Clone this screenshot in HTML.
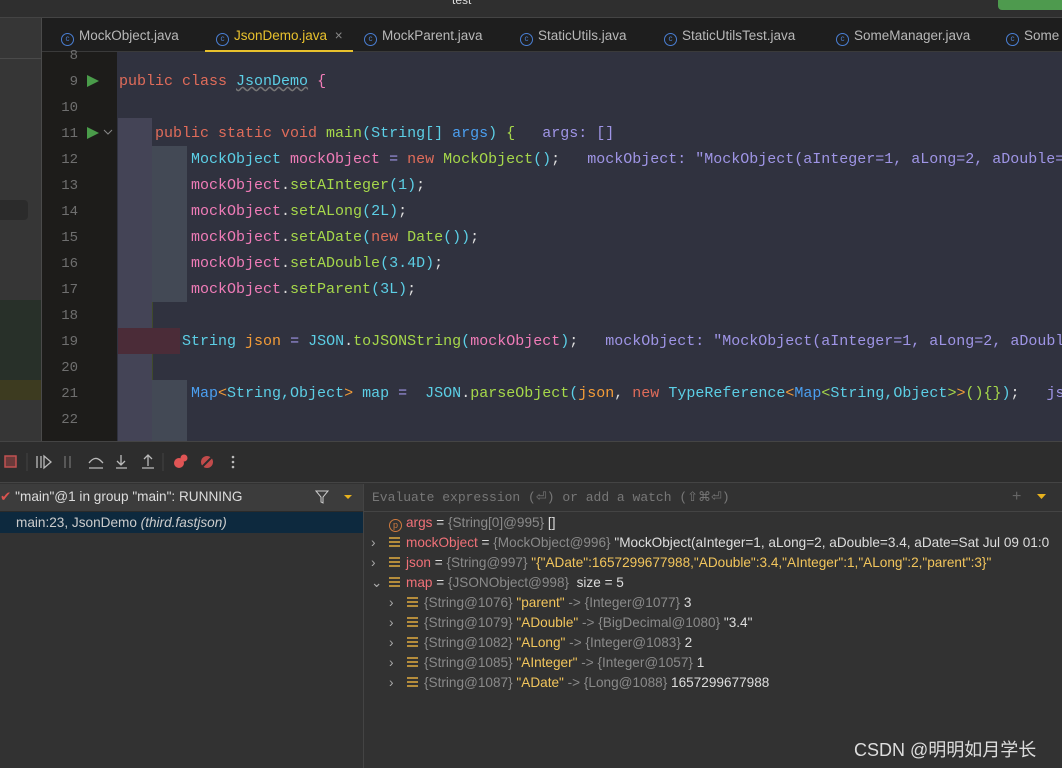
<!DOCTYPE html>
<html><head><meta charset="utf-8"><style>
*{margin:0;padding:0;box-sizing:border-box}
body{width:1062px;height:768px;overflow:hidden;background:#323232;font-family:"Liberation Sans","Noto Sans CJK SC",sans-serif;position:relative;color:#bbb}
.a{position:absolute}
.code{font-family:"Liberation Mono",monospace;font-size:15px;white-space:pre;line-height:26px}
.ln{position:absolute;left:42px;width:36px;text-align:right;font-family:"Liberation Mono",monospace;font-size:14px;color:#6f6f6f}
.k{color:#e06c5a}.t{color:#5ccfe6}.v{color:#f07cb8}.f{color:#a6d84a}.p{color:#5ccfe6}.n{color:#5ccfe6}.h{color:#9f95e6}.w{color:#ddd}.o{color:#f39c38}.m{color:#4b9ff0}
.tab{position:absolute;top:28px;font-size:13.5px;color:#b8b8b8}
.tab i{display:inline-block;width:13px;height:13px;border:1.5px solid #4a7fd4;border-radius:50%;font-style:normal;font-size:8px;line-height:10px;text-align:center;color:#4a7fd4;margin-right:5px;vertical-align:-1px}
.var{position:absolute;font-size:13.6px;white-space:pre;color:#ddd}
.g{color:#8a8a8a}.r{color:#f07178}.y{color:#f2c55c}
.ic{display:inline-block;width:11px;height:11px;background:repeating-linear-gradient(#b58d3c 0 2px,transparent 2px 4px);vertical-align:-1px;margin-right:6px}
.ch{color:#aaa;display:inline-block;width:18px}
</style></head><body>
<div class="a" style="left:0;top:0;width:1062px;height:18px;background:#2f2f2f;border-bottom:1px solid #444"></div>
<div class="a" style="left:452px;top:-7px;font-size:12px;color:#ddd">test</div>
<div class="a" style="left:998px;top:0;width:64px;height:10px;background:#4e9a4e;border-radius:0 0 0 4px"></div>
<div class="a" style="left:0;top:18px;width:42px;height:423px;background:#363636;border-right:1px solid #4a4a4a"></div>
<div class="a" style="left:0;top:58px;width:42px;height:1px;background:#4a4a4a"></div>
<div class="a" style="left:0;top:200px;width:28px;height:20px;background:#2b2b2b;border-radius:0 4px 4px 0"></div>
<div class="a" style="left:0;top:300px;width:41px;height:80px;background:#283029"></div>
<div class="a" style="left:0;top:380px;width:41px;height:20px;background:#3d3b20"></div>
<div class="a" style="left:42px;top:18px;width:1020px;height:34px;background:#1e1e1e;border-bottom:1px solid #3a3a3a"></div>
<div class="tab" style="left:61px"><i>c</i>MockObject.java</div>
<div class="tab" style="left:216px;color:#e8c12d"><i>c</i>JsonDemo.java <span style="color:#888;margin-left:4px">×</span></div>
<div class="a" style="left:205px;top:50px;width:148px;height:2px;background:#e8c12d"></div>
<div class="tab" style="left:364px"><i>c</i>MockParent.java</div>
<div class="tab" style="left:520px"><i>c</i>StaticUtils.java</div>
<div class="tab" style="left:664px"><i>c</i>StaticUtilsTest.java</div>
<div class="tab" style="left:836px"><i>c</i>SomeManager.java</div>
<div class="tab" style="left:1006px"><i>c</i>Some</div>
<div class="a" style="left:42px;top:52px;width:75px;height:389px;background:#1d1c1a"></div>
<div class="a" style="left:117px;top:52px;width:945px;height:389px;background:#30323f"></div>
<div class="a" style="left:118px;top:118px;width:34px;height:323px;background:#444456"></div>
<div class="a" style="left:152px;top:146px;width:35px;height:156px;background:#434955"></div>
<div class="a" style="left:152px;top:302px;width:1px;height:139px;background:#3f4a2a"></div>
<div class="a" style="left:118px;top:328px;width:62px;height:26px;background:#4b2c38"></div>
<div class="a" style="left:152px;top:380px;width:35px;height:61px;background:#434955"></div>
<div class="ln" style="top:48px">8</div>
<div class="ln" style="top:74px">9</div><div class="ln" style="top:100px">10</div><div class="ln" style="top:126px">11</div>
<div class="ln" style="top:152px">12</div><div class="ln" style="top:178px">13</div><div class="ln" style="top:204px">14</div>
<div class="ln" style="top:230px">15</div><div class="ln" style="top:256px">16</div><div class="ln" style="top:282px">17</div>
<div class="ln" style="top:308px">18</div><div class="ln" style="top:334px">19</div><div class="ln" style="top:360px">20</div>
<div class="ln" style="top:386px">21</div><div class="ln" style="top:412px">22</div>
<svg class="a" style="left:86px;top:74px" width="14" height="14"><path d="M1 1L13 7L1 13Z" fill="#4a9c4a"/></svg>
<svg class="a" style="left:86px;top:126px" width="30" height="14"><path d="M1 1L13 7L1 13Z" fill="#4a9c4a"/><path d="M18 4l4 4l4-4" stroke="#888" fill="none"/></svg>
<div class="a code" style="left:119px;top:69px"><span class="k">public class </span><span class="t" style="text-decoration:underline wavy #777">JsonDemo</span> <span class="v">{</span>

    <span class="k">public static void </span><span class="f">main</span><span class="p">(</span><span class="t">String</span><span class="p">[] </span><span class="m">args</span><span class="p">)</span> <span class="f">{</span>   <span class="h">args: []</span>
        <span class="t">MockObject</span> <span class="v">mockObject</span> <span class="h">=</span> <span class="k">new</span> <span class="f">MockObject</span><span class="p">()</span><span class="w">;</span>   <span class="h">mockObject: "MockObject(aInteger=1, aLong=2, aDouble=3.4</span>
        <span class="v">mockObject</span><span class="w">.</span><span class="f">setAInteger</span><span class="p">(1)</span><span class="w">;</span>
        <span class="v">mockObject</span><span class="w">.</span><span class="f">setALong</span><span class="p">(2L)</span><span class="w">;</span>
        <span class="v">mockObject</span><span class="w">.</span><span class="f">setADate</span><span class="p">(</span><span class="k">new</span> <span class="f">Date</span><span class="p">())</span><span class="w">;</span>
        <span class="v">mockObject</span><span class="w">.</span><span class="f">setADouble</span><span class="p">(3.4D)</span><span class="w">;</span>
        <span class="v">mockObject</span><span class="w">.</span><span class="f">setParent</span><span class="p">(3L)</span><span class="w">;</span>

       <span class="t">String</span> <span class="o">json</span> <span class="h">=</span> <span class="t">JSON</span><span class="w">.</span><span class="f">toJSONString</span><span class="p">(</span><span class="v">mockObject</span><span class="p">)</span><span class="w">;</span>   <span class="h">mockObject: "MockObject(aInteger=1, aLong=2, aDouble=3.4</span>

        <span class="m">Map</span><span class="o">&lt;</span><span class="t">String,Object</span><span class="o">&gt;</span> <span class="t">map</span> <span class="h">=</span>  <span class="t">JSON</span><span class="w">.</span><span class="f">parseObject</span><span class="p">(</span><span class="o">json</span><span class="w">,</span> <span class="k">new</span> <span class="t">TypeReference</span><span class="o">&lt;</span><span class="m">Map</span><span class="f">&lt;</span><span class="t">String,Object</span><span class="f">&gt;</span><span class="o">&gt;</span><span class="f">(){}</span><span class="p">)</span><span class="w">;</span>   <span class="h">json</span></div>
<div class="a" style="left:0;top:441px;width:1062px;height:42px;background:#2d2d2d;border-top:1px solid #444;border-bottom:1px solid #444"></div>
<svg class="a" style="left:0;top:450px" width="250" height="24">
<rect x="5" y="6" width="11" height="11" fill="#6a3a3a" stroke="#c25151" stroke-width="1.5"/>
<line x1="27" y1="3" x2="27" y2="21" stroke="#444"/>
<path d="M37 6v12M41 6v12M44 6l7 6l-7 6z" stroke="#bbb" fill="none" stroke-width="1.3"/>
<path d="M65 6v12M70 6v12" stroke="#666" stroke-width="1.5"/>
<path d="M89 13q6-8 12-2l2 2M89 18h14" stroke="#bbb" fill="none" stroke-width="1.3"/>
<path d="M121 5v9M117 11l4 4l4-4M116 18h11" stroke="#bbb" fill="none" stroke-width="1.3"/>
<path d="M148 16v-10M144 9l4-4l4 4M142 18h12" stroke="#bbb" fill="none" stroke-width="1.3"/>
<line x1="163" y1="3" x2="163" y2="21" stroke="#444"/>
<circle cx="179" cy="13" r="5" fill="#e05555"/><circle cx="184" cy="8" r="3.5" fill="#e05555"/>
<circle cx="207" cy="12" r="6" fill="#c24b4b"/><line x1="201" y1="18" x2="213" y2="6" stroke="#2d2d2d" stroke-width="2"/>
<circle cx="233" cy="7" r="1.3" fill="#bbb"/><circle cx="233" cy="12" r="1.3" fill="#bbb"/><circle cx="233" cy="17" r="1.3" fill="#bbb"/>
</svg>
<div class="a" style="left:0;top:484px;width:363px;height:28px;background:#3c3c3c;border-bottom:1px solid #2a2a2a"></div>
<div class="a" style="left:0;top:489px;font-size:13.6px;color:#ddd"><span style="color:#d9534f">✔</span> "main"@1 in group "main": RUNNING</div>
<svg class="a" style="left:315px;top:490px" width="40" height="14"><path d="M1 1h12l-5 6v6l-2-1v-5z" stroke="#ccc" fill="none"/><path d="M29 5h8l-4 4z" fill="#e8b21d"/></svg>
<div class="a" style="left:0;top:512px;width:363px;height:21px;background:#0d293e"></div>
<div class="a" style="left:16px;top:515px;font-size:13.6px;color:#ccc">main:23, JsonDemo <i>(third.fastjson)</i></div>
<div class="a" style="left:363px;top:484px;width:1px;height:284px;background:#444"></div>
<div class="a" style="left:364px;top:484px;width:698px;height:28px;background:#323232;border-bottom:1px solid #444"></div>
<div class="a" style="left:372px;top:490px;font-family:'Liberation Mono',monospace;font-size:13px;color:#777">Evaluate expression (⏎) or add a watch (⇧⌘⏎)</div>
<div class="a" style="left:1012px;top:488px;color:#666;font-size:16px">+</div>
<svg class="a" style="left:1037px;top:494px" width="10" height="6"><path d="M0 0h9l-4.5 5z" fill="#e8b21d"/></svg>
<div class="var" style="left:389px;top:515px"><span style="display:inline-block;width:13px;height:13px;border:1px solid #d07a3e;border-radius:50%;color:#d07a3e;font-size:9px;text-align:center;line-height:11px;margin-right:4px;vertical-align:-1px">p</span><span class="r">args</span> = <span class="g">{String[0]@995}</span> []</div>
<div class="var" style="left:371px;top:535px"><span class="ch">›</span><span class="ic"></span><span class="r">mockObject</span> = <span class="g">{MockObject@996}</span> "MockObject(aInteger=1, aLong=2, aDouble=3.4, aDate=Sat Jul 09 01:0</div>
<div class="var" style="left:371px;top:555px"><span class="ch">›</span><span class="ic"></span><span class="r">json</span> = <span class="g">{String@997}</span> <span class="y">"{"ADate":1657299677988,"ADouble":3.4,"AInteger":1,"ALong":2,"parent":3}"</span></div>
<div class="var" style="left:371px;top:575px"><span class="ch">⌄</span><span class="ic"></span><span class="r">map</span> = <span class="g">{JSONObject@998}</span>  size = 5</div>
<div class="var" style="left:389px;top:595px"><span class="ch">›</span><span class="ic"></span><span class="g">{String@1076}</span> <span class="y">"parent"</span> <span class="g">-&gt; {Integer@1077}</span> 3</div>
<div class="var" style="left:389px;top:615px"><span class="ch">›</span><span class="ic"></span><span class="g">{String@1079}</span> <span class="y">"ADouble"</span> <span class="g">-&gt; {BigDecimal@1080}</span> "3.4"</div>
<div class="var" style="left:389px;top:635px"><span class="ch">›</span><span class="ic"></span><span class="g">{String@1082}</span> <span class="y">"ALong"</span> <span class="g">-&gt; {Integer@1083}</span> 2</div>
<div class="var" style="left:389px;top:655px"><span class="ch">›</span><span class="ic"></span><span class="g">{String@1085}</span> <span class="y">"AInteger"</span> <span class="g">-&gt; {Integer@1057}</span> 1</div>
<div class="var" style="left:389px;top:675px"><span class="ch">›</span><span class="ic"></span><span class="g">{String@1087}</span> <span class="y">"ADate"</span> <span class="g">-&gt; {Long@1088}</span> 1657299677988</div>
<div class="a" style="left:854px;top:736px;font-size:18px;color:#ddd">CSDN @明明如月学长</div>
</body></html>
